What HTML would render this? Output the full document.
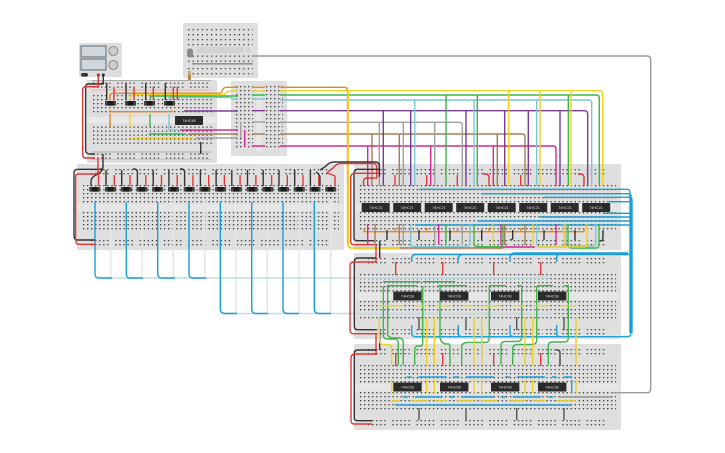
<!DOCTYPE html>
<html><head><meta charset="utf-8"><style>
html,body{margin:0;padding:0;background:#fff;width:725px;height:453px;overflow:hidden}
svg{display:block;filter:blur(.3px)}
.w path{fill:none;stroke-width:1.4;stroke-linejoin:round}
.t{font:3.6px "Liberation Sans",sans-serif;fill:#ddd;text-anchor:middle}
</style></head><body>
<svg width="725" height="453" viewBox="0 0 725 453" xmlns="http://www.w3.org/2000/svg">
<defs>
<pattern id="h" width="4.05" height="4" patternUnits="userSpaceOnUse"><rect width="1.3" height="1.3" fill="#3a3a3a"/></pattern>
<pattern id="a" width="4.6" height="5" patternUnits="userSpaceOnUse"><rect width="1.3" height="1.3" fill="#3a3a3a"/></pattern>
<pattern id="r" width="24.3" height="4" patternUnits="userSpaceOnUse"><rect width="1.3" height="1.3" fill="#3a3a3a"/><rect x="4.05" width="1.3" height="1.3" fill="#3a3a3a"/><rect x="8.1" width="1.3" height="1.3" fill="#3a3a3a"/><rect x="12.15" width="1.3" height="1.3" fill="#3a3a3a"/><rect x="16.2" width="1.3" height="1.3" fill="#3a3a3a"/></pattern>
<g id="big"><rect width="267" height="86" rx="1" fill="#dfdfdf"/><rect y="40" width="267" height="7" fill="#e6e6e6"/>
<g transform="translate(14,5)"><rect width="240" height="8" fill="url(#r)"/></g>
<g transform="translate(6,21)"><rect width="256" height="20" fill="url(#h)"/></g>
<g transform="translate(6,48)"><rect width="256" height="20" fill="url(#h)"/></g>
<g transform="translate(14,76)"><rect width="240" height="8" fill="url(#r)"/></g></g>
<g id="sw"><rect width="11" height="4.6" fill="#444"/><rect x="2.5" width="6" height="4.6" fill="#1c1c1c"/></g>
</defs>

<!-- boards -->
<use href="#big" x="77" y="164"/>
<use href="#big" x="354" y="164"/>
<use href="#big" x="354" y="253"/>
<use href="#big" x="354" y="344"/>

<!-- top small board -->
<rect x="183" y="23" width="75" height="55" rx="1" fill="#dfdfdf"/>
<g transform="translate(188,29)"><rect width="65" height="20" fill="url(#a)"/></g>
<g transform="translate(188,55.5)"><rect width="65" height="10" fill="url(#a)"/></g>
<g transform="translate(188,68)"><rect width="65" height="8" fill="url(#a)"/></g>
<rect x="197" y="47" width="47" height="6" fill="#d2d2d2"/><circle cx="248.5" cy="50" r="2.5" fill="#d2d2d2"/>
<rect x="192" y="63" width="61" height="1.6" fill="#8b959d"/>
<rect x="187" y="48.5" width="6" height="9" rx="2.5" fill="#8a8a8a"/>
<rect x="188" y="71" width="2.8" height="9" fill="#c9a86c"/><rect x="188" y="75" width="2.8" height="1.4" fill="#3fa34d"/><rect x="188" y="77" width="2.8" height="2.4" fill="#e2672a"/>

<!-- PSU -->
<rect x="79" y="43" width="43" height="34" rx="1" fill="#dedede"/>
<rect x="81" y="46" width="25" height="11" fill="#cfd8dc" stroke="#6e7c82" stroke-width="1.2"/>
<rect x="81" y="59" width="25" height="11" fill="#cfd8dc" stroke="#6e7c82" stroke-width="1.2"/>
<circle cx="113.3" cy="51" r="4.5" fill="#ccc" stroke="#777" stroke-width=".8"/>
<circle cx="113.3" cy="65" r="4.5" fill="#ccc" stroke="#777" stroke-width=".8"/>
<rect x="81" y="73" width="7" height="3.6" rx="1.8" fill="#333"/>
<circle cx="98.3" cy="75" r="1.5" fill="#b22"/><circle cx="103.3" cy="75" r="1.5" fill="#222"/>

<!-- board C -->
<rect x="87" y="80" width="130" height="83" rx="1" fill="#dfdfdf"/>
<rect x="87" y="117" width="130" height="6" fill="#e8e8e8"/>
<rect x="92" y="80" width="119" height="1" fill="#a8a8a8"/>
<rect x="92" y="89.5" width="119" height="1" fill="#e8b4b4"/>
<rect x="92" y="151.5" width="119" height="1" fill="#a8a8a8"/>
<rect x="92" y="158.8" width="119" height="1" fill="#e8b4b4"/>
<g transform="translate(93,82.5)"><rect width="120" height="8" fill="url(#r)"/></g>
<g transform="translate(93,95)"><rect width="120" height="20" fill="url(#h)"/></g>
<g transform="translate(93,126.5)"><rect width="120" height="20" fill="url(#h)"/></g>
<g transform="translate(93,153.5)"><rect width="120" height="8" fill="url(#r)"/></g>

<!-- board D -->
<rect x="231" y="81" width="56" height="75" rx="1" fill="#dfdfdf"/>
<rect x="256" y="86" width="6" height="65" fill="#e8e8e8"/>
<g transform="translate(236,86)"><rect width="17" height="64" fill="url(#h)"/></g>
<g transform="translate(266,86)"><rect width="17" height="64" fill="url(#h)"/></g>

<g class="w">
<!-- gray long -->
<path stroke="#9c9c9c" d="M251.7 56H647Q650.7 56 650.7 60V389Q650.7 392.7 647 392.7H611.7"/>

<!-- pale white wires in E -->
<path stroke="#e6e6e6" d="M110.7 200V278M142 200V278M173.3 200V278M204.7 200V278M236 200V313M267.3 200V313M299 200V313M330.7 200V313"/>
<path stroke="#e6e6e6" d="M400 262V258Q400 255.5 403 255.5H628M446.7 262V256M496.7 262V256M543.3 262V256M400 325V333Q400 336 404 336H628M446.7 325V336M496.7 325V336M543.3 325V336"/>
<!-- pale horizontals -->
<path stroke="#bcdde9" d="M98 278H550M223 313.5H553"/>
<!-- blue -->
<path stroke="#1a9fd6" d="M95 202V274Q95 278 99 278H112M126.3 202V274Q126.3 278 130 278H143M157.7 202V274Q157.7 278 162 278H175M189 202V274Q189 278 193 278H206"/>
<path stroke="#1a9fd6" d="M220.3 202V309Q220.3 313.5 225 313.5H237M251.7 202V309Q251.7 313.5 256 313.5H268M283 202V309Q283 313.5 288 313.5H299M314.3 202V309Q314.3 313.5 319 313.5H331"/>
<path stroke="#1a9fd6" d="M418.7 189.3H627Q630 189.3 630 192V333M481 193.7H628Q631 193.7 631 196V333M544 197.3H629Q632 197.3 632 200V333M606.7 201.7H629Q632 201.7 632 204V225"/>
<path stroke="#1a9fd6" d="M603 213.3H630M540 217H630M477.3 221H630M415 225H630"/>
<path stroke="#1a9fd6" d="M411.7 262V259Q411.7 254.5 416 254.5H628Q631 254.5 631 251M458.3 262V259Q458.3 254.5 463 254.5M510 262V258Q510 253 515 253H628M556.7 262V258Q556.7 253 561 253M411.7 325V333Q411.7 336.7 416 336.7H627Q631 336.7 631 333M458.3 325V333Q458.3 336.7 462 336.7M510 325V333Q510 336.7 514 336.7M556.7 325V333Q556.7 336.7 560 336.7"/>

<!-- trunks -->
<path stroke="#e8861c" d="M110 114V127M110 100V96Q110 93.3 113 93.3H219Q221.7 93.3 222.5 90Q223.5 87.3 227 87.3H238M252 87.3H265M280 87.3H344Q347.5 87.3 347.5 90V244"/>
<path stroke="#a87c52" d="M188 134H238M252 134H265M280 134H522Q525 134 525 137V186M372 134Q372 134 372 137V186M399.3 134V186M497.3 134V186"/>
<path stroke="#d12a90" d="M180 130H238M244.7 130V147M252 146H265M280 146H553Q556 146 556 149V186M367.7 146V186M430.7 146V186M493.3 146V186"/>
<path stroke="#a0a0a0" d="M196 138H238M240.7 122V138M252 122H265M280 122.3H459Q462.3 122.3 462.3 125V186M379.3 122.3V186M403.3 122.3V186M434.7 122.3V186"/>
<path stroke="#7a3b96" d="M184 111H238M252 110.7H265M280 110.7H584Q587.7 110.7 587.7 114V186M383.3 110.7V186M410.7 110.7V186M466 110.7V186M504.7 110.7V186M528.3 110.7V186M560 110.7V186"/>
<path stroke="#7cc8d2" d="M169 114V130H178M169 100V98Q169 97.3 172 97.3H228Q231 97.3 232 99H238M252 99H265M280 100H588Q591.7 100 591.7 103V186M414.7 100V186M474 100V186M536.7 100V186"/>
<path stroke="#3fb44c" d="M150 114V127M150 100Q150 96 153 96H238M252 95H265M280 95H596Q599.3 95 599.3 98V186M446 95V186M477.3 95V186M568.3 95V186M149 134H186"/>
<path stroke="#f0d020" d="M130 114V127M130 100Q130 94.5 134 94.5H225Q227 91 232 91H238M252 91H265M280 90.7H599Q602.7 90.7 602.7 94V186M508.7 90.7V186M540 90.7V186M571 90.7V186M130 138H193"/>
<path stroke="#f0cf10" d="M348 91V244Q348 248 352 248H400" style="stroke-width:1.8"/>

<!-- board C details -->
<path stroke="#e8861c" d="M110 111.7H172M110 110V112M172 110V112"/>
<path stroke="#333" d="M106.7 83V100M126 83V100M145.7 83V100M165.3 83V100M200.7 142V154"/>
<path stroke="#e03838" d="M114 86.7V100M134 86.7V100M153.3 86.7V100M173.3 86.7V100M177.3 86.7V100"/>

<!-- power C -->
<path stroke="#333" d="M103.3 75V84H88Q85.7 84 85.7 87V150Q85.7 154 90 154H95"/>
<path stroke="#e03838" d="M98.3 75V86.7H86Q82.7 86.7 82.7 90V155Q82.7 158 86 158H95"/>
<!-- C to E -->
<path stroke="#333" d="M103 154V166Q103 169.3 100 169.3H78Q74 169.3 74 173V236Q74 240 78 240H95M103 166Q103 172 96 175Q91 177 91 182V186"/>
<path stroke="#e03838" d="M98 158V171Q98 174 95 174H78Q75.7 174 75.7 177V240Q75.7 244.3 79 244.3H95M98 171Q99 178 98.3 186"/>
<!-- E drops -->
<path stroke="#333" d="M106 170V186M121.7 170V186M133 169H134Q137.4 169 137.4 172V186M153.2 170V186M168.9 170V186M180 169H181Q184.6 169 184.6 172V186M200.4 170V186M216.1 170V186M231.8 170V186M247.5 170V186M263.2 170V186M279 170V186M294.7 170V186M310.4 170V186M320 186V178Q320 174 316 172"/>
<path stroke="#e03838" d="M114.3 175V186M130 175V186M145.8 175V186M161.5 175V186M177.2 175V186M192.9 175V186M208.7 175V186M224.4 175V186M240.1 175V186M255.9 175V186M271.6 175V186M287.3 175V186M303 175V186M318.8 175V186"/>
<!-- E to F -->
<path stroke="#333" d="M320 170Q324 168 328 164Q331 162 335 162H375Q379.3 162 379.3 166V177"/>
<path stroke="#e03838" d="M335 186V176Q330 174 327 173Q330 170 333 168Q336 164 340 163.5H373Q376.7 163.5 376.7 167V178H367Q363.5 178 363.5 182V186"/>
<path stroke="#333" d="M379 169.3H358Q354 169.3 354 173V238Q354 240.7 357 240.7H375"/>
<path stroke="#e03838" d="M379 173.3H356Q350.7 173.3 350.7 177V241Q350.7 244.7 354 244.7H375"/>

<!-- F red -->
<path stroke="#e03838" d="M395 175V186M426.7 175V186M457.3 175V186M483 174H486Q489 174 489 178V186M520.7 175V186M578 174H581Q584 174 584 178V186"/>
<!-- F lower -->
<path stroke="#e8861c" d="M364 231.7H584M364 228V232M395 228V232M426.7 228V232M457.3 228V232M489 228V232M520.7 228V232M552 228V232M584 228V232"/>
<path stroke="#d12a90" d="M367.7 224V245M438.7 224V245M501 224V245M556 224V245M501 247H535"/>
<path stroke="#a87c52" d="M375 224V245M399.3 224V245M504.7 224V245M525 224V245M400 248H503"/>
<path stroke="#a0a0a0" d="M403.3 224V245M434.7 224V245M462.3 224V245"/>
<path stroke="#7cc8d2" d="M410.7 224V243Q410.7 246.7 414 246.7H466Q470 246.7 470 243V224M536.7 224V243Q536.7 246.7 540 246.7H563Q566 246.7 566 243V224M595.7 224V243Q595.7 246 592 246H570"/>
<path stroke="#3fb44c" d="M446 224V245M474 224V243Q474 246.7 477 246.7H499Q503 246.7 503 243V224M568 224V244Q568 248 572 248H596Q599 248 599 244V224"/>
<path stroke="#f0d020" d="M493.3 224V245M533 224V245M564 224V245M587 224V243Q587 247 584 247H566M537 247H566"/>
<path stroke="#333" d="M387 230V240M419 230V240M450 230V240M481.7 230V240M512.7 230V238Q512.7 240 510 240M544 230V240M575 230V240M603 230V238Q603 241 600 241"/>

<!-- F to G, G to H -->
<path stroke="#e03838" d="M376 245V262M376 333V355"/>
<path stroke="#333" d="M379.7 241V258M379.7 330V350"/>
<path stroke="#333" d="M376 258H358Q354.3 258 354.3 262V326Q354.3 329.7 358 329.7H376"/>
<path stroke="#e03838" d="M376 262H354Q350 262 350 266V330Q350 333.7 354 333.7H376"/>
<path stroke="#333" d="M376 350H358Q354.3 350 354.3 353V418Q354.3 420.7 358 420.7H372"/>
<path stroke="#e03838" d="M376 354H356Q351 354 351 358V420Q351 424 354 424H372"/>

<!-- G details -->
<path stroke="#e03838" d="M395.7 262V275M442.7 262V275M493.7 262V275M540.7 262V275M395.7 353V366M442.7 353V366M493.7 353V366M540.7 353V366"/>
<path stroke="#555" d="M419 317V330M466 317V330M516.7 317V330M564 317V330M419 408V420M466 408V420M516.7 408V420M564 408V420"/>
<path stroke="#444" d="M556 350H557.5Q560 350 560 353V366"/>
<path stroke="#3fb44c" d="M383 281.7H420M422.7 281.7H455M387 285.7H417M438 285.7H467M489 285.7H506M517 285.7H522M537 285.7H553M564 285.7H569"/>
<path stroke="#3fb44c" d="M383.3 286V336Q384 339 388 339H395Q398.3 340 398.3 343V365M387.7 286V334Q388 337 392 338H400Q403.3 339 403.3 343V365M422.7 286V343Q422.7 346 420 346H417Q414.7 347 414.7 350V365M440 286V336Q440 343 446 344H449Q450 345 450 347V365M489.3 286V338Q489.3 342 486 342.5H467Q461.7 343 461.7 347V365M521.7 286V337Q521.7 341 518 341.5H505Q501 342 501 345V365M536.7 286V340Q536.7 344 533 344.5H517Q512.7 345 512.7 349V365M568.3 286V338Q568.3 342 565 342H552Q548.3 342.3 548.3 346V365"/>
<path stroke="#f0d020" d="M379 305.7H403M415 305.7H427M435 305.7H451M462 305.7H474M482 305.7H502M513 305.7H525M533 305.7H549M560 305.7H576"/>
<path stroke="#f0d020" d="M379.3 317V341Q380 344.5 384 344.5H388Q391.7 345 391.7 349V365M426.7 317V365M434.3 317V365M474 317V365M481.7 317V365M525 317V365M532.7 317V365M576 317V365"/>
<path stroke="#f0d020" d="M391.7 380V393M426.7 380V393M434.3 380V393M474 380V393M481.7 380V393M525 380V393M532.7 380V393M576 380V393"/>
<!-- H lines -->
<path stroke="#1a9fd6" d="M406.7 377H411.7M418.3 377H446.7M453.3 377H459.3M466 377H494M505 377H510M516.7 377H545M552 377H556.7M564 377H572M402.7 397H407.7M415 397H442.7M450 397H455M461.7 397H494M500.7 397H505.7M512.7 397H540.7M548.3 397H553.3M395 405H572M571.7 380V393"/>
<path stroke="#f0d020" d="M391 401H400M410.7 401H427.3M434.3 401H446.7M457.3 401H474.3M481.7 401H497.7M509 401H525M532.7 401H545M556 401H576"/>
<path stroke="#a0a0a0" d="M560 397H611.7" style="stroke-width:1.7"/>
</g>

<!-- switches -->
<g><use href="#sw" x="105" y="101"/><use href="#sw" x="125" y="101"/><use href="#sw" x="144" y="101"/><use href="#sw" x="164" y="101"/></g>
<g><use href="#sw" x="89.3" y="187"/><use href="#sw" x="105" y="187"/><use href="#sw" x="120.8" y="187"/><use href="#sw" x="136.5" y="187"/><use href="#sw" x="152.2" y="187"/><use href="#sw" x="168" y="187"/><use href="#sw" x="183.7" y="187"/><use href="#sw" x="199.4" y="187"/><use href="#sw" x="215.1" y="187"/><use href="#sw" x="230.9" y="187"/><use href="#sw" x="246.6" y="187"/><use href="#sw" x="262.3" y="187"/><use href="#sw" x="278" y="187"/><use href="#sw" x="293.8" y="187"/><use href="#sw" x="309.5" y="187"/><use href="#sw" x="325.2" y="187"/></g>

<!-- ICs -->
<g fill="#2b2b2b">
<rect x="175" y="116" width="28" height="9" rx=".6"/>
<rect x="361.7" y="203" width="28" height="9" rx=".6"/><rect x="393.2" y="203" width="28" height="9" rx=".6"/><rect x="424.7" y="203" width="28" height="9" rx=".6"/><rect x="456.2" y="203" width="28" height="9" rx=".6"/><rect x="487.7" y="203" width="28" height="9" rx=".6"/><rect x="519.2" y="203" width="28" height="9" rx=".6"/><rect x="550.7" y="203" width="28" height="9" rx=".6"/><rect x="582.2" y="203" width="28" height="9" rx=".6"/>
<rect x="393.3" y="291.5" width="28.4" height="9" rx=".6"/><rect x="440" y="291.5" width="28.4" height="9" rx=".6"/><rect x="491" y="291.5" width="28.4" height="9" rx=".6"/><rect x="538" y="291.5" width="28.4" height="9" rx=".6"/>
<rect x="393.3" y="382.5" width="28.4" height="9" rx=".6"/><rect x="440" y="382.5" width="28.4" height="9" rx=".6"/><rect x="491" y="382.5" width="28.4" height="9" rx=".6"/><rect x="538" y="382.5" width="28.4" height="9" rx=".6"/>
</g>
<g class="t">
<text x="189" y="122">74HC86</text>
<text x="376" y="209">74HC21</text><text x="407" y="209">74HC21</text><text x="439" y="209">74HC21</text><text x="470" y="209">74HC21</text><text x="502" y="209">74HC21</text><text x="533" y="209">74HC21</text><text x="565" y="209">74HC21</text><text x="596" y="209">74HC21</text>
<text x="407.5" y="297.5">74HC08</text><text x="454" y="297.5">74HC08</text><text x="505" y="297.5">74HC08</text><text x="552" y="297.5">74HC08</text>
<text x="407.5" y="388.5">74HC08</text><text x="454" y="388.5">74HC08</text><text x="505" y="388.5">74HC08</text><text x="552" y="388.5">74HC08</text>
</g>
</svg>
</body></html>
